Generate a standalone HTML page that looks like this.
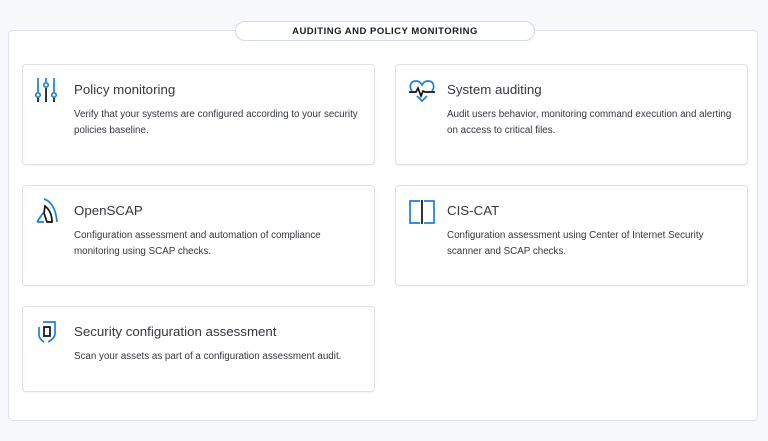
<!DOCTYPE html>
<html><head><style>
*{margin:0;padding:0;box-sizing:border-box}
body{width:768px;height:441px;background:#f7f8fb;font-family:"Liberation Sans",sans-serif;position:relative;overflow:hidden}
.panel{position:absolute;left:8px;top:30px;width:750px;height:391px;background:#fff;border:1px solid #dde2ea;border-radius:5px}
.pill{position:absolute;left:235px;top:21px;width:300px;height:20px;background:#fff;border:1px solid #d3dae6;border-radius:10px;text-align:center;font-size:9.5px;font-weight:bold;letter-spacing:.5px;line-height:19px;color:#1a1c21}
.card{position:absolute;background:#fff;border:1px solid #dde2ea;border-radius:4px;box-shadow:0 1px 2px rgba(0,0,0,.05)}
.card svg{position:absolute;left:12px;top:12px}
.card h3{position:absolute;left:51px;top:17px;font-size:13.3px;font-weight:normal;color:#343741}
.card p{position:absolute;left:51px;top:42px;right:14px;font-size:9.8px;line-height:16px;color:#343741}
</style></head><body>
<div class="panel"></div>
<div class="pill">AUDITING AND POLICY MONITORING</div>

<div class="card" style="left:22px;top:64px;width:353px;height:101px">
<svg width="28" height="28" viewBox="0 0 28 28" fill="none" stroke-width="1.7">
<path d="M3 1v14M11 1v4M19 1v14" stroke="#1e7ee0"/>
<path d="M3 21v4M11 11v14M19 21v4" stroke="#111"/>
<circle cx="3" cy="18" r="2.2" stroke="#1e7ee0"/><circle cx="11" cy="8" r="2.2" stroke="#1e7ee0"/><circle cx="19" cy="18" r="2.2" stroke="#1e7ee0"/>
</svg>
<h3>Policy monitoring</h3>
<p>Verify that your systems are configured according to your security policies baseline.</p>
</div>

<div class="card" style="left:395px;top:64px;width:353px;height:101px">
<svg width="28" height="28" viewBox="0 0 28 28" fill="none" stroke-width="1.7">
<path d="M4 14C1 10 2 4 8 4c3 0 5 2 6 4c1-2 3-4 6-4c6 0 7 6 4 10" stroke="#1e7ee0"/>
<path d="M9 19l5 5l5-5" stroke="#1e7ee0"/>
<path d="M1 15h7l2-4l3 8l2-5l2 1h10" stroke="#111"/>
</svg>
<h3>System auditing</h3>
<p>Audit users behavior, monitoring command execution and alerting on access to critical files.</p>
</div>

<div class="card" style="left:22px;top:185px;width:353px;height:101px">
<svg width="28" height="28" viewBox="0 0 28 28" fill="none" stroke-width="1.7">
<path d="M9 1c7 2 12 10 13 23M2 24l6-9M2 24h7" stroke="#1e7ee0"/>
<path d="M10 8c5 4 7 10 7 16h-5l-3-9z" stroke="#111"/>
</svg>
<h3>OpenSCAP</h3>
<p>Configuration assessment and automation of compliance monitoring using SCAP checks.</p>
</div>

<div class="card" style="left:395px;top:185px;width:353px;height:101px">
<svg width="28" height="28" viewBox="0 0 28 28" fill="none" stroke-width="1.7">
<path d="M12 3H2v22h10M16 3h10v22H16" stroke="#1e7ee0"/>
<path d="M14 2v24" stroke="#111"/>
</svg>
<h3>CIS-CAT</h3>
<p>Configuration assessment using Center of Internet Security scanner and SCAP checks.</p>
</div>

<div class="card" style="left:22px;top:306px;width:353px;height:86px">
<svg width="28" height="28" viewBox="0 0 28 28" fill="none" stroke-width="1.7">
<path d="M8 3h12v11c0 4-3 7-7 9M4 8v8c0 3 2 5 5 7" stroke="#1e7ee0"/>
<path d="M9 8h6v9h-6z" stroke="#111"/>
</svg>
<h3>Security configuration assessment</h3>
<p>Scan your assets as part of a configuration assessment audit.</p>
</div>
</body></html>
